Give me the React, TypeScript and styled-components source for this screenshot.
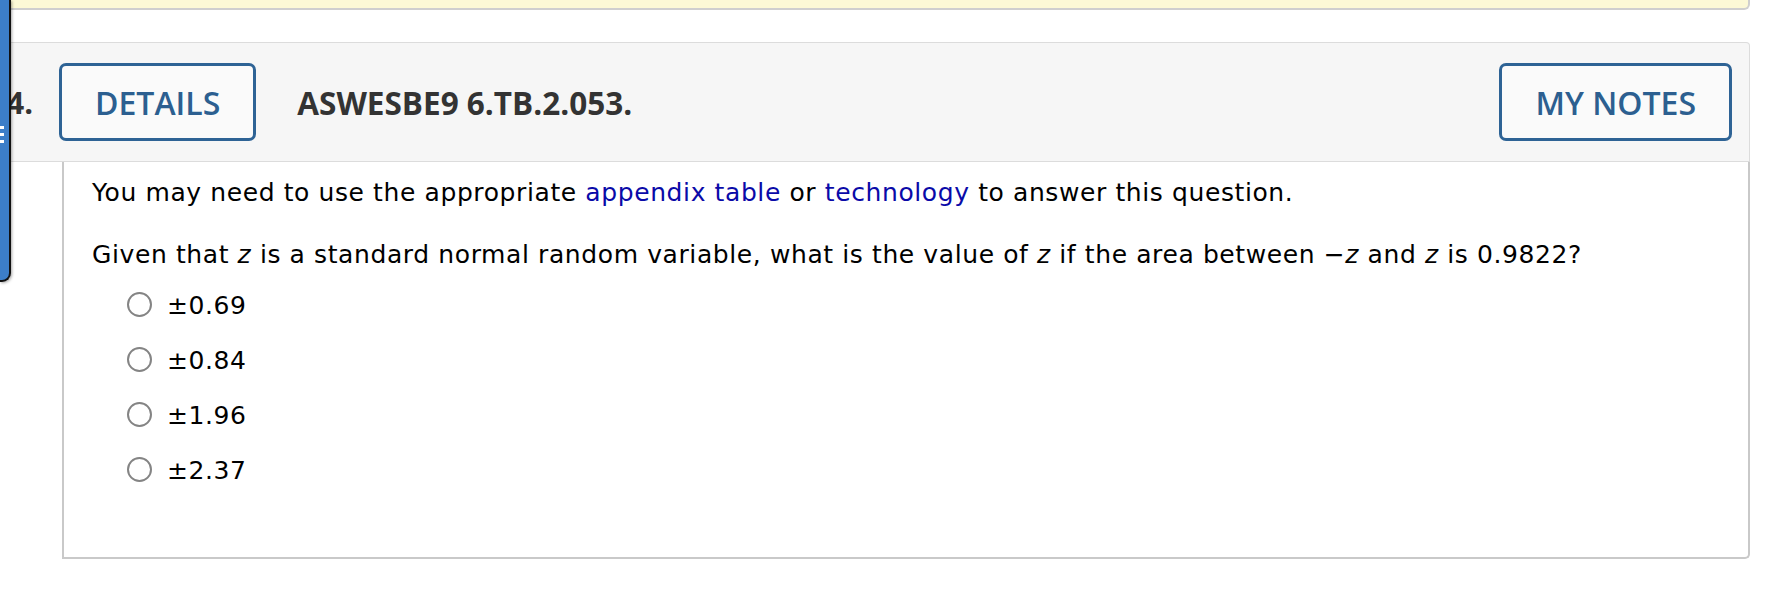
import React from 'react';
import styled, { createGlobalStyle } from 'styled-components';

const GlobalStyle = createGlobalStyle`
	html, body {
		margin: 0;
		padding: 0;
		background: #ffffff;
	}
	body {
		font-family: "DejaVu Sans", Verdana, sans-serif;
		overflow: hidden;
	}
`;

const Page = styled.div`
	padding-right: 29px;
`;

const Banner = styled.div`
	height: 8px;
	background-color: #fcf9d6;
	border-bottom: 2px solid #cfcfcf;
	border-right: 2px solid #cfcfcf;
	border-bottom-right-radius: 6px;
`;

const SidePanel = styled.div`
	position: fixed;
	top: 0;
	left: 0;
	width: 9px;
	height: 280px;
	background-color: #3c7ec8;
	border-right: 2px solid #111;
	border-bottom: 2px solid #111;
	border-bottom-right-radius: 9px;
	box-shadow: 1px 1px 3px rgba(0, 0, 0, 0.35);
	z-index: 10;
`;

const PanelMark = styled.svg`
	position: absolute;
	top: 126px;
	left: 0;
`;

const Question = styled.div`
	margin-top: 32px;
`;

const Header = styled.div`
	display: flex;
	align-items: center;
	height: 118px;
	padding-right: 17px;
	background-color: #f6f6f6;
	border: 1px solid #dcdcdc;
	border-left: none;
	border-top-right-radius: 4px;
	font-family: "Open Sans", "Liberation Sans", sans-serif;
`;

const Number = styled.div`
	width: 33px;
	text-align: right;
	font-size: 31px;
	font-weight: 700;
	color: #333;
`;

const HeaderButton = styled.button<{ $first?: boolean }>`
	height: 78px;
	padding: 0 33px;
	margin-left: ${p => (p.$first ? '26px' : 'auto')};
	background-color: #fafafa;
	border: 3px solid #2e6395;
	border-radius: 7px;
	color: #2c5f90;
	font-family: "Open Sans", "Liberation Sans", sans-serif;
	font-size: 32px;
	font-weight: 600;
	cursor: pointer;
`;

const Title = styled.h2`
	margin: 0 0 0 41px;
	font-size: 31.5px;
	font-weight: 700;
	color: #333;
`;

const Body = styled.div`
	margin-left: 62px;
	height: 380px;
	padding: 15px 28px 0 28px;
	border: 2px solid #c9c9c9;
	border-top: none;
	border-bottom-right-radius: 5px;
	font-size: 25px;
	letter-spacing: 0.6px;
	line-height: 32px;
	color: #000;
`;

const Para = styled.p`
	margin: 0 0 30px 0;
`;

const Link = styled.a`
	color: #0a0aa8;
	text-decoration: none;
`;

const Options = styled.div`
	margin: -23px 0 0 35px;
`;

const Option = styled.label`
	display: flex;
	align-items: center;
	gap: 15px;
	padding: 11.5px 0;
	cursor: pointer;
`;

const Radio = styled.input`
	appearance: none;
	margin: 0;
	width: 25px;
	height: 25px;
	border: 2px solid #848484;
	border-radius: 50%;
	background: #fff;
	position: relative;
	top: -1px;
`;

const choices = ['±0.69', '±0.84', '±1.96', '±2.37'];

const App = () => {
	return (
		<>
			<GlobalStyle />
			<SidePanel>
				<PanelMark width="4" height="18" viewBox="0 0 4 18">
					<rect x="0" y="0" width="4" height="3" fill="#fff" />
					<rect x="0" y="7" width="4" height="3" fill="#fff" />
					<rect x="0" y="14" width="4" height="3" fill="#fff" />
				</PanelMark>
			</SidePanel>
			<Page>
				<Banner />
				<Question>
					<Header>
						<Number>4.</Number>
						<HeaderButton $first>DETAILS</HeaderButton>
						<Title>ASWESBE9 6.TB.2.053.</Title>
						<HeaderButton>MY NOTES</HeaderButton>
					</Header>
					<Body>
						<Para>
							You may need to use the appropriate <Link href="#">appendix table</Link> or{' '}
							<Link href="#">technology</Link> to answer this question.
						</Para>
						<Para>
							Given that <i>z</i> is a standard normal random variable, what is the value of <i>z</i> if the
							area between −<i>z</i> and <i>z</i> is 0.9822?
						</Para>
						<Options>
							{choices.map(c => (
								<Option key={c}>
									<Radio type="radio" name="q4" />
									{c}
								</Option>
							))}
						</Options>
					</Body>
				</Question>
			</Page>
		</>
	);
};

export default App;
